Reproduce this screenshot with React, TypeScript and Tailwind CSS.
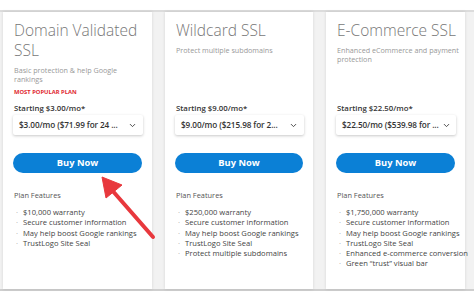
import { ChevronDown } from 'lucide-react'

interface Plan {
  title: string[]
  desc: string[]
  popular?: boolean
  starting: string
  option: string
  features: string[]
  width: string
}

const PLANS: Plan[] = [
  {
    title: ['Domain Validated', 'SSL'],
    desc: ['Basic protection & help Google', 'rankings'],
    popular: true,
    starting: 'Starting $3.00/mo*',
    option: '$3.00/mo ($71.99 for 24 ...',
    features: ['$10,000 warranty', 'Secure customer information', 'May help boost Google rankings', 'TrustLogo Site Seal'],
    width: 'w-[149px]',
  },
  {
    title: ['Wildcard SSL'],
    desc: ['Protect multiple subdomains'],
    starting: 'Starting $9.00/mo*',
    option: '$9.00/mo ($215.98 for 2...',
    features: [
      '$250,000 warranty',
      'Secure customer information',
      'May help boost Google rankings',
      'TrustLogo Site Seal',
      'Protect multiple subdomains',
    ],
    width: 'w-[148px]',
  },
  {
    title: ['E-Commerce SSL'],
    desc: ['Enhanced eCommerce and payment', 'protection'],
    starting: 'Starting $22.50/mo*',
    option: '$22.50/mo ($539.98 for ...',
    features: [
      '$1,750,000 warranty',
      'Secure customer information',
      'May help boost Google rankings',
      'TrustLogo Site Seal',
      'Enhanced e-commerce conversion',
      'Green \u201ctrust\u201d visual bar',
    ],
    width: 'w-[139px]',
  },
]

function PlanCard({ plan }: { plan: Plan }) {
  return (
    <div className={`${plan.width} shrink-0 bg-white shadow-[0_0_3px_rgba(0,0,0,0.12)] pl-[11px] pr-[9px] pt-[8px]`}>
      <div className="h-[83px]">
        <h2 className="text-[15.5px] font-light leading-[20px] text-[#777]">
          {plan.title.map((t) => (
            <div key={t} className="whitespace-nowrap">{t}</div>
          ))}
        </h2>
        <p className="mt-[6px] text-[7.2px] leading-[9px] text-[#999]">
          {plan.desc.map((d) => (
            <span key={d} className="block whitespace-nowrap">{d}</span>
          ))}
        </p>
        {plan.popular && (
          <p className="mt-[4px] text-[5.8px] leading-[8px] font-bold text-[#e0262e]">MOST POPULAR PLAN</p>
        )}
      </div>
      <p className="text-[7.8px] leading-[10px] font-semibold text-[#333]">{plan.starting}</p>
      <div className="mt-[2px] -ml-[1px] h-[20px] flex items-center justify-between gap-[3px] pl-[6px] pr-[6px] bg-white shadow-[0_1px_3px_rgba(0,0,0,0.22)] rounded-[2px]">
        <span className="text-[8.2px] font-semibold text-[#333] whitespace-nowrap tracking-[-0.1px]">{plan.option}</span>
        <ChevronDown className="h-[9px] w-[9px] shrink-0 text-[#444]" strokeWidth={2.5} />
      </div>
      <button className="mt-[18px] -ml-[1px] w-full h-[20px] rounded-full bg-[#0b80d6] text-white text-[9.3px] font-bold">
        Buy Now
      </button>
      <p className="mt-[17px] text-[7.4px] leading-[10px] text-[#555]">Plan Features</p>
      <ul className="mt-[7px] text-[7.6px] leading-[10.3px] text-[#444]">
        {plan.features.map((f) => (
          <li key={f} className="flex gap-[5px] whitespace-nowrap">
            <span className="text-[#999] pl-[2px]">&middot;</span>
            <span>{f}</span>
          </li>
        ))}
      </ul>
    </div>
  )
}

export default function App() {
  return (
    <div className="relative w-[474px] h-[305px] bg-white overflow-hidden" style={{ fontFamily: '"Open Sans", sans-serif' }}>
      <div className="h-[10px] bg-white" />
      <div className="h-[281px] border-t-2 border-[#dcdcdc] border-b-2 border-b-[#cfcfcf] bg-[#f2f2f2] flex gap-[13px] pl-[3px]">
        {PLANS.map((p) => (
          <PlanCard key={p.starting} plan={p} />
        ))}
      </div>
      <svg className="absolute inset-0 pointer-events-none" width="474" height="305" viewBox="0 0 474 305">
        <g fill="#e8383d" stroke="#e8383d" strokeLinejoin="round">
          <line x1="153" y1="237" x2="111" y2="189" strokeWidth="4" strokeLinecap="round" />
          <polygon points="102,177 106,198 122,185" strokeWidth="1" />
        </g>
      </svg>
    </div>
  )
}
